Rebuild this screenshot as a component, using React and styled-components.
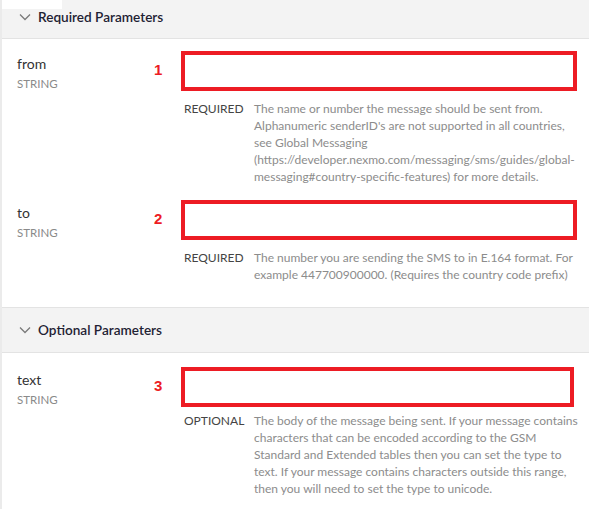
import React from 'react'
import styled, { createGlobalStyle, css } from 'styled-components';

const params = {
    required: [
        {
            id: 'from',
            mark: '1',
            flag: 'REQUIRED',
            lines: [
                'The name or number the message should be sent from.',
                "Alphanumeric senderID's are not supported in all countries,",
                'see Global Messaging',
                '(https://developer.nexmo.com/messaging/sms/guides/global-',
                'messaging#country-specific-features) for more details.',
            ],
        },
        {
            id: 'to',
            mark: '2',
            flag: 'REQUIRED',
            lines: [
                'The number you are sending the SMS to in E.164 format. For',
                'example 447700900000. (Requires the country code prefix)',
            ],
        },
    ],
    optional: [
        {
            id: 'text',
            mark: '3',
            flag: 'OPTIONAL',
            inset: 4,
            metaTop: 5,
            lines: [
                'The body of the message being sent. If your message contains',
                'characters that can be encoded according to the GSM',
                'Standard and Extended tables then you can set the type to',
                'text. If your message contains characters outside this range,',
                'then you will need to set the type to unicode.',
            ],
        },
    ],
};

const Chevron = () => (
    <svg width="12" height="8" viewBox="0 0 12 8">
        <path d="M1 1.5 L6 6.5 L11 1.5" fill="none" stroke="#7a7a7a" strokeWidth="1.3" />
    </svg>
);

const Param = ({ p }) => (
    <Row>
        <NameCol>
            <Name>{p.id}</Name>
            <Type>STRING</Type>
        </NameCol>
        <Marker>{p.mark}</Marker>
        <FieldCol>
            <RedBox $inset={p.inset || 0} />
            <Meta $top={p.metaTop || 9}>
                <Flag>{p.flag}</Flag>
                <Desc>
                    {p.lines.map((l, i) => <Line key={i}>{l}</Line>)}
                </Desc>
            </Meta>
        </FieldCol>
    </Row>
);

const App = () => {
    return (
        <>
            <Global />
            <Panel>
                <Header $notch $height={34}>
                    <Chevron />
                    <Title>Required Parameters</Title>
                </Header>
                <Section>
                    {params.required.map(p => <Param key={p.id} p={p} />)}
                </Section>
                <Header $height={44} $bordered>
                    <Chevron />
                    <Title>Optional Parameters</Title>
                </Header>
                <Section $top={6}>
                    {params.optional.map(p => <Param key={p.id} p={p} />)}
                </Section>
            </Panel>
        </>
    )
}

const Global = createGlobalStyle`
    html, body {
        margin: 0;
        background: #fff;
        font-family: Lato, "Open Sans", sans-serif;
    }
`;
const Panel = styled.div`
    width: 589px;
    height: 509px;
    overflow: hidden;
    border-left: 2px solid #ebebeb;
    box-sizing: border-box;
`;
const Header = styled.div`
    position: relative;
    display: flex;
    align-items: center;
    gap: 7px;
    height: ${props => props.$height}px;
    padding-left: 17px;
    background: #f3f3f3;
    border-bottom: 1px solid #e3e3e3;
    ${props => props.$notch && css`
    padding-bottom: 4px;
    &::before {
        content: '';
        position: absolute;
        left: -2px;
        top: 0;
        width: 62px;
        height: 9px;
        background: #fff;
    }`}
    ${props => props.$bordered && css`
    border-top: 1px solid #e3e3e3;`}
`;
const Title = styled.span`
    font-size: 13.6px;
    font-weight: 600;
    color: #1f2233;
`;
const Section = styled.div`
    padding: ${props => props.$top || 4}px 0 17px;
`;
const Row = styled.div`
    display: grid;
    grid-template-columns: 134px 30px 1fr;
    padding: 8px 12px 7px 15px;
`;
const NameCol = styled.div`
    display: flex;
    flex-direction: column;
    padding-top: 4px;
`;
const Name = styled.div`
    font-size: 14px;
    line-height: 18px;
    color: #333;
`;
const Type = styled.div`
    margin-top: 4px;
    font-size: 11.5px;
    line-height: 14px;
    color: #8a8a8a;
`;
const Marker = styled.div`
    padding-top: 10px;
    padding-left: 3px;
    font-size: 15px;
    line-height: 18px;
    font-weight: 700;
    color: #ed1c24;
    font-family: "Liberation Sans", Arial, sans-serif;
`;
const FieldCol = styled.div`
    display: flex;
    flex-direction: column;
`;
const RedBox = styled.div`
    height: 40px;
    margin-right: ${props => props.$inset}px;
    border: 4px solid #ed1c24;
    box-sizing: border-box;
`;
const Meta = styled.div`
    display: grid;
    grid-template-columns: 70px 1fr;
    margin-top: ${props => props.$top}px;
    padding-left: 3px;
`;
const Flag = styled.div`
    font-size: 12px;
    line-height: 17px;
    color: #444;
`;
const Desc = styled.div`
    font-size: 12px;
    line-height: 17px;
    color: #8c8c8c;
`;
const Line = styled.div`
    white-space: nowrap;
`;

export default App;
